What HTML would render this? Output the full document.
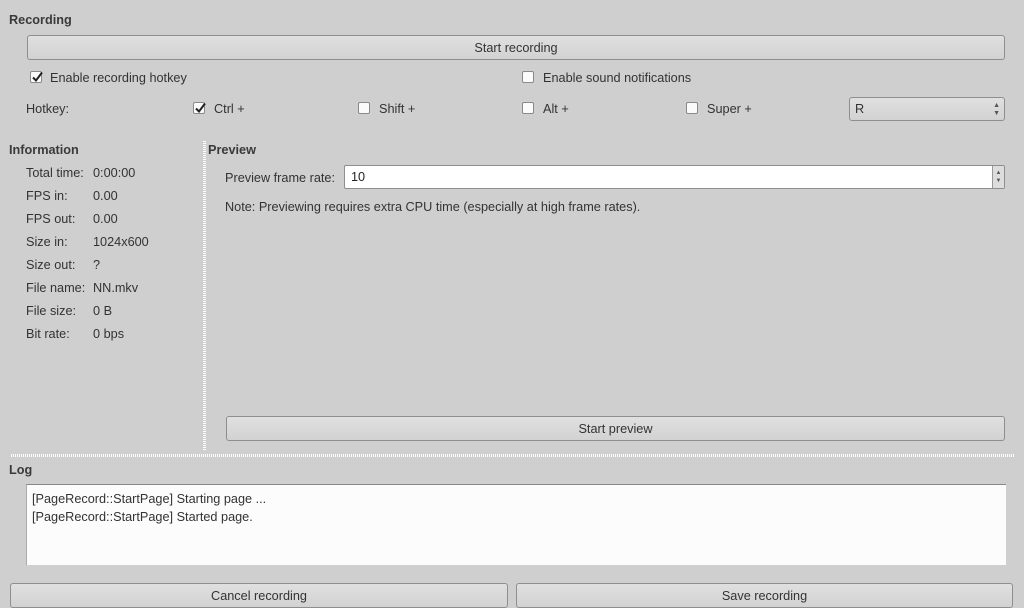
<!DOCTYPE html>
<html><head><style>
body{margin:0;width:1024px;height:600px;background:#cfcfcf;font-family:"Liberation Sans",sans-serif;font-size:12.7px;color:#333;position:relative;overflow:hidden}
.a{position:absolute;white-space:nowrap;margin-top:1px}
.b{font-weight:bold;color:#3a3a3a}
.btn{position:absolute;box-sizing:border-box;border:1px solid #8e8e8e;border-radius:3px;background:linear-gradient(#e0e0e0,#d2d2d2);text-align:center;color:#333;line-height:24px!important}
.cb{position:absolute;width:12px;height:12px;box-sizing:border-box;border:1px solid #8a8a8a;border-radius:2px;background:#fbfbfb}
.cb svg{position:absolute;left:0;top:-2px}
.in{position:absolute;box-sizing:border-box;border:1px solid #8e8e8e;border-radius:2px;background:#fff}
</style></head><body>
<div class="a b" style="left:9px;top:12px">Recording</div>
<div class="btn" style="left:27px;top:35px;width:978px;height:25px">Start recording</div>
<div class="cb" style="left:30px;top:71px"><svg width="14" height="14" viewBox="0 0 14 14"><path d="M2 7.5L5 10.5L11 2.5" stroke="#222" stroke-width="2" fill="none"/></svg></div>
<div class="a" style="left:50px;top:70px">Enable recording hotkey</div>
<div class="cb" style="left:522px;top:71px"></div>
<div class="a" style="left:543px;top:70px">Enable sound notifications</div>
<div class="a" style="left:26px;top:101px">Hotkey:</div>
<div class="cb" style="left:193px;top:102px"><svg width="14" height="14" viewBox="0 0 14 14"><path d="M2 7.5L5 10.5L11 2.5" stroke="#222" stroke-width="2" fill="none"/></svg></div>
<div class="a" style="left:214px;top:101px">Ctrl +</div>
<div class="cb" style="left:358px;top:102px"></div>
<div class="a" style="left:379px;top:101px">Shift +</div>
<div class="cb" style="left:522px;top:102px"></div>
<div class="a" style="left:543px;top:101px">Alt +</div>
<div class="cb" style="left:686px;top:102px"></div>
<div class="a" style="left:707px;top:101px">Super +</div>
<div class="btn" style="left:849px;top:97px;width:156px;height:24px;text-align:left;padding-left:5px;line-height:22px!important">R<span style="position:absolute;right:4px;font-size:7px;line-height:8px;top:4px;color:#555">▲<br>▼</span></div>

<div style="position:absolute;left:203px;top:140px;width:3px;height:311px;background:repeating-linear-gradient(#cfcfcf 0 1px,#fff 1px 2px)"></div>
<div style="position:absolute;left:10px;top:454px;width:1004px;height:3px;background:repeating-linear-gradient(90deg,#cfcfcf 0 1px,#fff 1px 2px)"></div>

<div class="a b" style="left:9px;top:142px">Information</div>
<div class="a" style="left:26px;top:165px">Total time:</div><div class="a" style="left:93px;top:165px">0:00:00</div>
<div class="a" style="left:26px;top:188px">FPS in:</div><div class="a" style="left:93px;top:188px">0.00</div>
<div class="a" style="left:26px;top:211px">FPS out:</div><div class="a" style="left:93px;top:211px">0.00</div>
<div class="a" style="left:26px;top:234px">Size in:</div><div class="a" style="left:93px;top:234px">1024x600</div>
<div class="a" style="left:26px;top:257px">Size out:</div><div class="a" style="left:93px;top:257px">?</div>
<div class="a" style="left:26px;top:280px">File name:</div><div class="a" style="left:93px;top:280px">NN.mkv</div>
<div class="a" style="left:26px;top:303px">File size:</div><div class="a" style="left:93px;top:303px">0 B</div>
<div class="a" style="left:26px;top:326px">Bit rate:</div><div class="a" style="left:93px;top:326px">0 bps</div>

<div class="a b" style="left:208px;top:142px">Preview</div>
<div class="a" style="left:225px;top:170px">Preview frame rate:</div>
<div class="in" style="left:344px;top:165px;width:661px;height:24px;padding-left:6px;line-height:23px;color:#222">10<span style="position:absolute;right:0;top:0;width:12px;height:22px;border-left:1px solid #999;background:#ddd;font-size:6px;line-height:8px;text-align:center;padding-top:3px;box-sizing:border-box;color:#555">▲<br>▼</span></div>
<div class="a" style="left:225px;top:199px">Note: Previewing requires extra CPU time (especially at high frame rates).</div>
<div class="btn" style="left:226px;top:416px;width:779px;height:25px">Start preview</div>

<div class="a b" style="left:9px;top:462px">Log</div>
<div style="position:absolute;left:26px;top:484px;width:980px;height:81px;background:#fcfcfc;border-top:1px solid #888;border-left:1px solid #aaa;box-sizing:border-box;padding:5px 0 0 5px;line-height:18px;color:#333">[PageRecord::StartPage] Starting page ...<br>[PageRecord::StartPage] Started page.</div>

<div class="btn" style="left:10px;top:583px;width:498px;height:25px">Cancel recording</div>
<div class="btn" style="left:516px;top:583px;width:497px;height:25px">Save recording</div>
</body></html>
